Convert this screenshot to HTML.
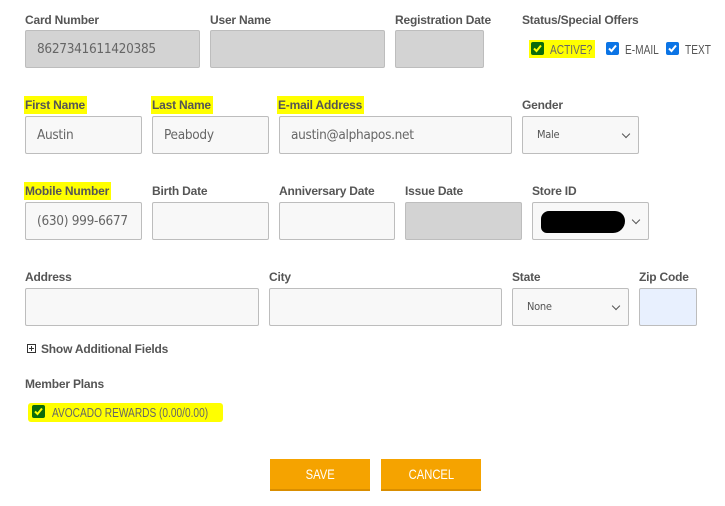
<!DOCTYPE html>
<html><head><meta charset="utf-8"><style>
*{box-sizing:border-box;margin:0;padding:0}
body{width:725px;height:506px;background:#fff;position:relative;overflow:hidden;font-family:"Liberation Sans",sans-serif}
.l{position:absolute;font-size:12px;font-weight:bold;color:#555;letter-spacing:-0.2px;white-space:nowrap}
.hl{background:#ffff00;color:#555;padding:2px 2px 2px 1px}
.i{position:absolute;height:38px;border:1px solid #bdbdbd;border-radius:2px;background:#f8f8f8;font-size:13.5px;color:#666;padding-left:11px;line-height:36px;white-space:nowrap;overflow:hidden;font-family:"DejaVu Sans Condensed","Liberation Sans",sans-serif;letter-spacing:-0.3px}
.g{background:#d3d3d3}
.s{font-size:11px;color:#555}
.s:after{content:"";position:absolute;right:9px;top:14px;width:5px;height:5px;border-right:1.5px solid #555;border-bottom:1.5px solid #555;transform:rotate(45deg)}
.cb{position:absolute;width:13px;height:13px;border-radius:2px;background:#0b74e5}
.cb svg{position:absolute;left:1px;top:1px}
.t{position:absolute;font-size:13px;color:#555;white-space:nowrap;transform:scaleX(0.78);transform-origin:0 0}
.btn{position:absolute;top:459px;width:100px;height:32px;background:#f5a300;border-bottom:2px solid #d98e00;color:#fff;font-size:14px;text-align:center;line-height:31px}
.btn span{display:inline-block;transform:scaleX(0.8)}
</style></head><body>
<div class="l" style="left:25px;top:13px">Card Number</div>
<div class="l" style="left:210px;top:13px">User Name</div>
<div class="l" style="left:395px;top:13px">Registration Date</div>
<div class="l" style="left:522px;top:13px">Status/Special Offers</div>
<div class="i g" style="left:25px;top:30px;width:175px">8627341611420385</div>
<div class="i g" style="left:210px;top:30px;width:175px"></div>
<div class="i g" style="left:395px;top:30px;width:89px"></div>

<div style="position:absolute;left:529px;top:40px;width:66px;height:18px;background:#ffff00"></div>
<div class="cb" style="left:531px;top:42px;background:#0b6b0b"><svg width="11" height="11" viewBox="0 0 11 11"><path d="M2 5.5l2.5 2.5 4.5-5.5" stroke="#ff0" stroke-width="2" fill="none"/></svg></div>
<div class="t" style="left:550px;top:42px;color:#666">ACTIVE?</div>
<div class="cb" style="left:606px;top:42px"><svg width="11" height="11" viewBox="0 0 11 11"><path d="M2 5.5l2.5 2.5 4.5-5.5" stroke="#fff" stroke-width="2" fill="none"/></svg></div>
<div class="t" style="left:625px;top:42px">E-MAIL</div>
<div class="cb" style="left:666px;top:42px"><svg width="11" height="11" viewBox="0 0 11 11"><path d="M2 5.5l2.5 2.5 4.5-5.5" stroke="#fff" stroke-width="2" fill="none"/></svg></div>
<div class="t" style="left:685px;top:42px">TEXT</div>

<div class="l" style="left:24px;top:98px"><span class="hl">First Name</span></div>
<div class="l" style="left:151px;top:98px"><span class="hl">Last Name</span></div>
<div class="l" style="left:277px;top:98px"><span class="hl">E-mail Address</span></div>
<div class="l" style="left:522px;top:98px">Gender</div>
<div class="i" style="left:25px;top:116px;width:117px">Austin</div>
<div class="i" style="left:152px;top:116px;width:117px">Peabody</div>
<div class="i" style="left:279px;top:116px;width:233px">austin@alphapos.net</div>
<div class="i s" style="left:522px;top:116px;width:117px;padding-left:14px">Male</div>

<div class="l" style="left:24px;top:184px"><span class="hl">Mobile Number</span></div>
<div class="l" style="left:152px;top:184px">Birth Date</div>
<div class="l" style="left:279px;top:184px">Anniversary Date</div>
<div class="l" style="left:405px;top:184px">Issue Date</div>
<div class="l" style="left:532px;top:184px">Store ID</div>
<div class="i" style="left:25px;top:202px;width:117px">(630) 999-6677</div>
<div class="i" style="left:152px;top:202px;width:117px"></div>
<div class="i" style="left:279px;top:202px;width:116px"></div>
<div class="i g" style="left:405px;top:202px;width:117px"></div>
<div class="i s" style="left:532px;top:202px;width:117px"><div style="position:absolute;left:8px;top:8px;width:84px;height:22px;background:#000;border-radius:8px 10px 12px 6px"></div></div>

<div class="l" style="left:25px;top:270px">Address</div>
<div class="l" style="left:269px;top:270px">City</div>
<div class="l" style="left:512px;top:270px">State</div>
<div class="l" style="left:639px;top:270px">Zip Code</div>
<div class="i" style="left:25px;top:288px;width:234px"></div>
<div class="i" style="left:269px;top:288px;width:233px"></div>
<div class="i s" style="left:512px;top:288px;width:117px;padding-left:14px">None</div>
<div class="i" style="left:639px;top:288px;width:58px;background:#e8f0fe"></div>

<div style="position:absolute;left:27px;top:344px;width:9px;height:9px;border:1px solid #333"><div style="position:absolute;left:1px;top:3px;width:5px;height:1px;background:#333"></div><div style="position:absolute;left:3px;top:1px;width:1px;height:5px;background:#333"></div></div>
<div class="l" style="left:41px;top:342px;font-size:12px">Show Additional Fields</div>
<div class="l" style="left:25px;top:377px">Member Plans</div>

<div style="position:absolute;left:28px;top:403px;width:195px;height:19px;background:#ffff00;border-radius:3px"></div>
<div class="cb" style="left:32px;top:405px;background:#0b6b0b"><svg width="11" height="11" viewBox="0 0 11 11"><path d="M2 5.5l2.5 2.5 4.5-5.5" stroke="#ff0" stroke-width="2" fill="none"/></svg></div>
<div class="t" style="left:52px;top:405px;color:#666">AVOCADO REWARDS (0.00/0.00)</div>

<div class="btn" style="left:270px"><span>SAVE</span></div>
<div class="btn" style="left:381px"><span>CANCEL</span></div>
</body></html>
